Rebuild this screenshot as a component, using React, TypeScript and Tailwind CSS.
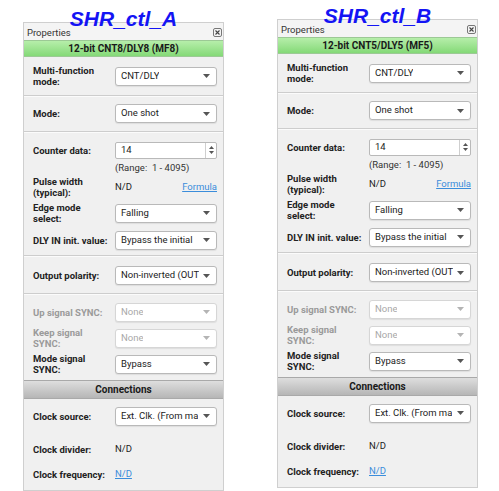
import React from 'react'

const panelFont = { fontFamily: 'Roboto, "Liberation Sans", sans-serif' }

function Arrow({ disabled }: { disabled?: boolean }) {
  return (
    <svg width="7" height="4" viewBox="0 0 7 4" className="shrink-0">
      <path d="M0 0h7L3.5 4z" fill={disabled ? '#b4b4b4' : '#555'} />
    </svg>
  )
}

function Select({ value, disabled }: { value: string; disabled?: boolean }) {
  return (
    <div
      className={`w-[102px] h-[19px] flex items-center justify-between pl-[5px] pr-[6px] rounded-[3px] border bg-white shadow-[0_1px_1px_rgba(0,0,0,0.08)] ${
        disabled ? 'border-[#d6d6d6] text-[#a8a8a8]' : 'border-[#b9b9b9] text-[#222]'
      }`}
    >
      <span className="text-[9.5px] whitespace-nowrap overflow-hidden">{value}</span>
      <Arrow disabled={disabled} />
    </div>
  )
}

function Label({ children, disabled }: { children: React.ReactNode; disabled?: boolean }) {
  return (
    <div
      className={`w-[82px] text-[9.5px] font-bold leading-[11px] ${disabled ? 'text-[#9a9a9a]' : 'text-[#222]'}`}
    >
      {children}
    </div>
  )
}

function Row({ h, className = '', children }: { h: string; className?: string; children: React.ReactNode }) {
  return <div className={`flex items-center pl-[9px] ${h} ${className}`}>{children}</div>
}

function Section({ className = '', children }: { className?: string; children: React.ReactNode }) {
  return (
    <div className={`border-t border-[#cdcdcd] shadow-[inset_0_1px_0_#fbfbfb] ${className}`}>{children}</div>
  )
}

function Panel({ title, header }: { title: string; header: string }) {
  return (
    <div className="relative w-[201px]" style={panelFont}>
      <div
        className="absolute left-0 right-0 top-[-14px] text-center text-[21px] leading-none font-bold italic text-[#1414f4]"
        style={{ fontFamily: '"Liberation Sans", Arial, sans-serif' }}
      >
        {title}
      </div>
      <div className="border border-[#cfcfcf] bg-[#f0f0f0]">
        <div className="h-[17px] flex items-center justify-between pl-[3px] pr-[1px] bg-[#f4f4f4]">
          <span className="text-[9.5px] text-[#333] pt-[3px]">Properties</span>
          <div className="w-[9px] h-[9px] border border-[#777] rounded-[2px] flex items-center justify-center mt-[2px]">
            <svg width="5" height="5" viewBox="0 0 5 5">
              <path d="M0.5 0.5l4 4M4.5 0.5l-4 4" stroke="#444" strokeWidth="1.1" />
            </svg>
          </div>
        </div>
        <div className="h-[17px] flex items-center justify-center text-[10px] font-bold text-[#1a1a1a] bg-gradient-to-b from-[#b6eeaa] to-[#84d977] border-y border-[#9cc995]">
          {header}
        </div>

        <div className="h-[38px] flex items-center pl-[9px]">
          <Label>
            Multi-function
            <br />
            mode:
          </Label>
          <Select value="CNT/DLY" />
        </div>

        <Section>
          <Row h="h-[35px]">
            <Label>Mode:</Label>
            <Select value="One shot" />
          </Row>
        </Section>

        <Section className="pt-[8px] pb-[5px]">
          <Row h="h-[20px]">
            <Label>Counter data:</Label>
            <div className="w-[102px] h-[17px] flex items-center justify-between bg-white border border-[#b9b9b9] rounded-[2px]">
              <span className="text-[9.5px] text-[#222] pl-[5px]">14</span>
              <div className="h-full w-[11px] border-l border-[#cfcfcf] flex flex-col items-center justify-center gap-[2px]">
                <svg width="5" height="3" viewBox="0 0 5 3">
                  <path d="M0 3h5L2.5 0z" fill="#555" />
                </svg>
                <svg width="5" height="3" viewBox="0 0 5 3">
                  <path d="M0 0h5L2.5 3z" fill="#555" />
                </svg>
              </div>
            </div>
          </Row>
          <Row h="h-[16px]">
            <div className="w-[82px]" />
            <span className="text-[9.5px] text-[#333] whitespace-pre">(Range:  1 - 4095)</span>
          </Row>
          <Row h="h-[22px]">
            <Label>
              Pulse width
              <br />
              (typical):
            </Label>
            <div className="w-[102px] flex justify-between text-[9.5px]">
              <span className="text-[#222]">N/D</span>
              <span className="text-[#3b8ddb] underline">Formula</span>
            </div>
          </Row>
          <Row h="h-[22px]" className="mt-[4px]">
            <Label>
              Edge mode
              <br />
              select:
            </Label>
            <Select value="Falling" />
          </Row>
          <Row h="h-[20px]" className="mt-[6px]">
            <Label>DLY IN init. value:</Label>
            <Select value="Bypass the initial" />
          </Row>
        </Section>

        <Section>
          <Row h="h-[37px]" className="pt-[2px]">
            <Label>Output polarity:</Label>
            <Select value="Non-inverted (OUT" />
          </Row>
        </Section>

        <Section className="pt-[5px] pb-[3px]">
          <Row h="h-[26px]">
            <Label disabled>Up signal SYNC:</Label>
            <Select value="None" disabled />
          </Row>
          <Row h="h-[26px]">
            <Label disabled>
              Keep signal
              <br />
              SYNC:
            </Label>
            <Select value="None" disabled />
          </Row>
          <Row h="h-[26px]">
            <Label>
              Mode signal
              <br />
              SYNC:
            </Label>
            <Select value="Bypass" />
          </Row>
        </Section>

        <div className="h-[19px] flex items-center justify-center text-[10px] font-bold text-[#1a1a1a] bg-gradient-to-b from-[#dedede] to-[#b6b6b6] border-y border-[#a9a9a9]">
          Connections
        </div>

        <div className="pt-[7px] pb-[6px]">
          <Row h="h-[20px]">
            <Label>Clock source:</Label>
            <Select value="Ext. Clk. (From ma" />
          </Row>
          <Row h="h-[20px]" className="mt-[13px]">
            <Label>Clock divider:</Label>
            <span className="text-[9.5px] text-[#222]">N/D</span>
          </Row>
          <Row h="h-[20px]" className="mt-[5px]">
            <Label>Clock frequency:</Label>
            <span className="text-[9.5px] text-[#3b8ddb] underline">N/D</span>
          </Row>
        </div>
      </div>
    </div>
  )
}

export default function App() {
  return (
    <div className="w-[499px] h-[491px] bg-white flex items-start gap-[53px] pl-[23px] pt-[19px] overflow-hidden">
      <div className="mt-[3px]">
        <Panel title="SHR_ctl_A" header="12-bit CNT8/DLY8 (MF8)" />
      </div>
      <Panel title="SHR_ctl_B" header="12-bit CNT5/DLY5 (MF5)" />
    </div>
  )
}
